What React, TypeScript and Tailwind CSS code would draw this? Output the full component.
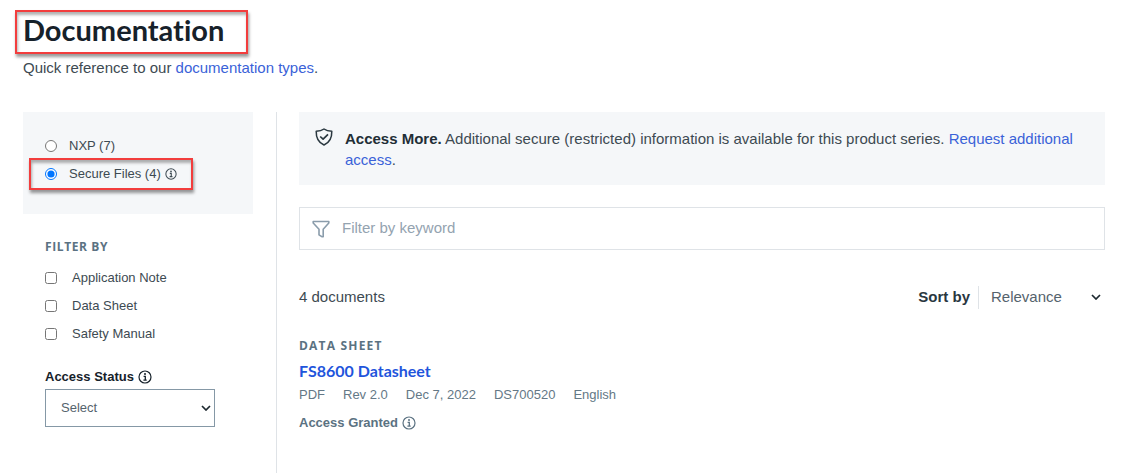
import { useState } from "react";

type Source = "nxp" | "secure";

type DocumentItem = {
  category: string;
  title: string;
  details: string[];
  status: string;
};

const documentTypes = ["Application Note", "Data Sheet", "Safety Manual"];

const documents: DocumentItem[] = [
  {
    category: "DATA SHEET",
    title: "FS8600 Datasheet",
    details: ["PDF", "Rev 2.0", "Dec 7, 2022", "DS700520", "English"],
    status: "Access Granted",
  },
];

function InfoIcon({ className }: { className: string }) {
  return (
    <svg viewBox="0 0 14 14" fill="none" stroke="currentColor" className={className} aria-hidden="true">
      <circle cx="7" cy="7" r="6" strokeWidth="1.2" />
      <circle cx="7" cy="4" r="1" fill="currentColor" stroke="none" />
      <path d="M5.6 6.3H7.3V9.9M5.4 10.1H8.7" strokeWidth="1.3" />
    </svg>
  );
}

function ShieldIcon() {
  return (
    <svg
      viewBox="0 0 18 18"
      fill="none"
      stroke="currentColor"
      strokeWidth="1.5"
      strokeLinejoin="round"
      className="h-[18px] w-[18px] shrink-0 text-[#29373f]"
      aria-hidden="true"
    >
      <path d="M9 1C7 2.5 4.3 3.2 1.2 3.2C1 9.8 3.3 14.5 9 17C14.7 14.5 17 9.8 16.8 3.2C13.7 3.2 11 2.5 9 1Z" />
      <path d="M5.2 8.5L8.1 11.2L13 6.3" strokeWidth="1.7" />
    </svg>
  );
}

function FilterIcon() {
  return (
    <svg
      viewBox="0 0 18 18"
      fill="none"
      stroke="currentColor"
      strokeWidth="1.6"
      strokeLinejoin="round"
      className="h-[18px] w-[18px] shrink-0 text-[#8a9cab]"
      aria-hidden="true"
    >
      <path d="M1.2 1.5H16.8V3L11.2 9.3V16.7H9.8L7 14.8V9.3L1.2 3Z" />
    </svg>
  );
}

function Chevron() {
  return (
    <svg
      viewBox="0 0 10 6"
      fill="none"
      stroke="currentColor"
      strokeWidth="1.7"
      className="pointer-events-none absolute top-1/2 right-1 h-[6px] w-[10px] -translate-y-1/2 text-[#1d2930]"
      aria-hidden="true"
    >
      <path d="M1 1L5 5L9 1" />
    </svg>
  );
}

function Highlight({ className }: { className: string }) {
  return (
    <span
      className={`pointer-events-none absolute border-2 border-[#f23d3d] shadow-[1px_3px_3px_rgba(0,0,0,0.4),inset_1px_3px_3px_rgba(0,0,0,0.3)] ${className}`}
    />
  );
}

export default function App() {
  const [source, setSource] = useState<Source>("secure");
  const [keyword, setKeyword] = useState("");

  return (
    <div className="flex min-h-screen flex-col bg-white pr-5 pl-[23px] font-['Liberation_Sans',Arial,sans-serif] text-[15px] text-[#3d4a52]">
      <header className="pt-3">
        <h1 className="relative w-fit font-['Lato',sans-serif] text-[29px] leading-9 font-bold text-[#16212a] [font-variant-ligatures:none]">
          Documentation
          <Highlight className="-top-0.5 -right-6 -bottom-1.5 -left-2" />
        </h1>
        <p className="mt-2.5 leading-5">
          Quick reference to our{" "}
          <a href="#types" className="text-[#3a62d8]">
            documentation types
          </a>
          .
        </p>
      </header>

      <div className="mt-[34px] flex grow">
        <aside className="w-[254px] shrink-0 border-r border-[#dfe3e7] pr-[23px] text-[13px]">
          <fieldset className="flex flex-col gap-2 bg-[#f5f7f9] px-[22px] pt-6 pb-[30px]">
            <label className="flex h-5 items-center gap-3">
              <input
                type="radio"
                name="source"
                checked={source === "nxp"}
                onChange={() => setSource("nxp")}
                className="h-3 w-3"
              />
              NXP (7)
            </label>
            <label className="relative flex h-5 w-fit items-center gap-3">
              <input
                type="radio"
                name="source"
                checked={source === "secure"}
                onChange={() => setSource("secure")}
                className="h-3 w-3"
              />
              <span className="flex items-center gap-1">
                Secure Files (4)
                <InfoIcon className="h-3 w-3" />
              </span>
              <Highlight className="-top-1.5 -right-4 -bottom-1.5 -left-4" />
            </label>
          </fieldset>

          <div className="mt-6 pl-[22px]">
            <fieldset>
              <legend className="font-['Open_Sans',sans-serif] text-[12px] leading-[18px] font-bold tracking-wider text-[#5b7282]">
                FILTER BY
              </legend>
              <div className="mt-3 flex flex-col gap-2">
                {documentTypes.map((type) => (
                  <label key={type} className="flex h-5 items-center gap-[15px]">
                    <input type="checkbox" className="h-3 w-3" />
                    {type}
                  </label>
                ))}
              </div>
            </fieldset>

            <label
              htmlFor="status"
              className="mt-6 flex items-center gap-1 text-[13px] leading-[18px] font-bold text-[#16212a]"
            >
              Access Status
              <InfoIcon className="h-3.5 w-3.5" />
            </label>
            <div className="relative mt-[3px] w-[170px]">
              <select
                id="status"
                className="h-[38px] w-full appearance-none border border-[#8598a6] bg-white px-[15px] text-[#55636d]"
              >
                <option>Select</option>
              </select>
              <Chevron />
            </div>
          </div>
        </aside>

        <main className="min-w-0 grow pl-[22px]">
          <section className="flex gap-3 bg-[#f5f7f9] px-4 pt-4 pb-[15px]">
            <ShieldIcon />
            <p className="leading-[21px]">
              <strong className="text-[#222e36]">Access More.</strong> Additional secure (restricted) information is
              available for this product series.{" "}
              <a href="#request" className="text-[#3a62d8]">
                Request additional access
              </a>
              .
            </p>
          </section>

          <div className="mt-[22px] flex h-[43px] items-center gap-3 border border-[#dfe3e7] px-3">
            <FilterIcon />
            <input
              type="text"
              aria-label="Filter by keyword"
              placeholder="Filter by keyword"
              value={keyword}
              onChange={(event) => setKeyword(event.target.value)}
              className="grow outline-none placeholder:text-[#94a3b0]"
            />
          </div>

          <div className="mt-9 flex items-center justify-between">
            <p>4 documents</p>
            <div className="flex items-center">
              <label htmlFor="sort" className="pr-2 font-bold text-[#29373f]">
                Sort by
              </label>
              <div className="relative border-l border-[#dfe3e7]">
                <select id="sort" className="h-[22px] w-[126px] appearance-none bg-white px-3 text-[#55636d]">
                  <option>Relevance</option>
                </select>
                <Chevron />
              </div>
            </div>
          </div>

          {documents.map((item) => (
            <article key={item.title} className="mt-7 text-[#647886]">
              <p className="font-['Open_Sans',sans-serif] text-[12px] leading-[18px] font-bold tracking-widest text-[#5b7282]">
                {item.category}
              </p>
              <h2 className="mt-1.5 font-['Lato',sans-serif] text-[16px] leading-5 font-bold">
                <a href="#document" className="text-[#1f55dc]">
                  {item.title}
                </a>
              </h2>
              <ul className="mt-1 flex gap-[18px] text-[13px] leading-5">
                {item.details.map((detail) => (
                  <li key={detail}>{detail}</li>
                ))}
              </ul>
              <p className="mt-2 flex items-center gap-1 text-[13px] leading-5 font-bold text-[#5b7282]">
                {item.status}
                <InfoIcon className="h-3.5 w-3.5" />
              </p>
            </article>
          ))}
        </main>
      </div>
    </div>
  );
}
